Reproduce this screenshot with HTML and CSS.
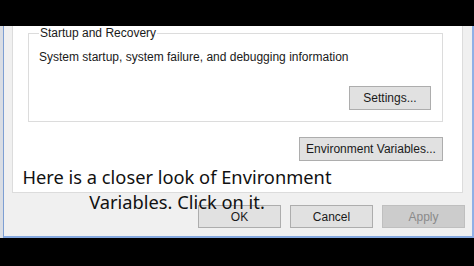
FILE: index.html
```html
<!DOCTYPE html>
<html>
<head>
<meta charset="utf-8">
<link rel="stylesheet" href="styles.css">
</head>
<body>
<div class="screen">
  <div class="bar-top"></div>
  <div class="frame">
    <div class="frame-edge"></div>
    <div class="dialog">
      <div class="panel">
        <fieldset class="group">
          <legend class="legend">Startup and Recovery</legend>
          <div class="group-text">System startup, system failure, and debugging information</div>
          <div class="group-actions">
            <button class="btn btn-settings">Settings...</button>
          </div>
        </fieldset>
        <div class="env-row">
          <button class="btn btn-env">Environment Variables...</button>
        </div>
      </div>
      <div class="footer">
        <button class="btn btn-foot">OK</button>
        <button class="btn btn-foot">Cancel</button>
        <button class="btn btn-foot btn-disabled">Apply</button>
      </div>
    </div>
  </div>
  <div class="bar-bottom"></div>
  <div class="caption">Here is a closer look of Environment<br>Variables. Click on it.</div>
</div>
</body>
</html>
```
FILE: styles.css
```css
html, body {
  margin: 0;
  padding: 0;
  background: #000;
}
.screen {
  position: relative;
  width: 474px;
  height: 266px;
  overflow: hidden;
  display: flex;
  flex-direction: column;
  font-family: "Liberation Sans", Arial, sans-serif;
  font-size: 12px;
  color: #1a1a1a;
}
.bar-top {
  height: 26px;
  background: #000;
  flex: none;
}
.bar-bottom {
  flex: 1;
  background: #000;
}
.frame {
  display: flex;
  height: 212px;
  flex: none;
  background: #dde2ea;
}
.frame-edge {
  width: 3px;
  background: #d9dde4;
  flex: none;
}
.dialog {
  flex: 1;
  background: #f0f0f0;
  border-left: 1px solid #7d9fd3;
  border-right: 2px solid #8fb0e6;
  border-bottom: 2px solid #86a9df;
  padding: 0 9px 0 8px;
  display: flex;
  flex-direction: column;
}
.panel {
  background: #fff;
  border: 1px solid #dcdcdc;
  border-top: none;
  height: 166px;
  padding: 0 19px 0 15px;
  display: flex;
  flex-direction: column;
}
.group {
  margin: 0;
  padding: 10px 11px 11px 10px;
  border: 1px solid #dcdcdc;
  height: 96px;
  box-sizing: border-box;
}
.legend {
  padding: 0 1px;
  line-height: 14px;
  margin-left: 0;
}
.group-text {
  line-height: 14px;
}
.group-actions {
  margin-top: 22px;
  display: flex;
  justify-content: flex-end;
}
.btn {
  font-family: "Liberation Sans", Arial, sans-serif;
  font-size: 12px;
  color: #1a1a1a;
  background: #e1e1e1;
  border: 1px solid #adadad;
  padding: 0;
  margin: 0;
  height: 24px;
  box-sizing: border-box;
}
.btn-settings {
  width: 82px;
}
.env-row {
  display: flex;
  justify-content: flex-end;
  margin-top: 15px;
}
.btn-env {
  width: 144px;
}
.footer {
  display: flex;
  justify-content: flex-end;
  gap: 9px;
  margin-top: 12px;
  margin-right: -2px;
}
.btn-foot {
  width: 83px;
  height: 23px;
}
.btn-disabled {
  background: #cccccc;
  border-color: #bfbfbf;
  color: #8a8a8a;
}
.caption {
  position: absolute;
  left: 0;
  width: 354px;
  top: 164px;
  text-align: center;
  font-family: "Noto Sans", "Open Sans", sans-serif;
  font-size: 18.3px;
  line-height: 25px;
  color: #111;
}
```
